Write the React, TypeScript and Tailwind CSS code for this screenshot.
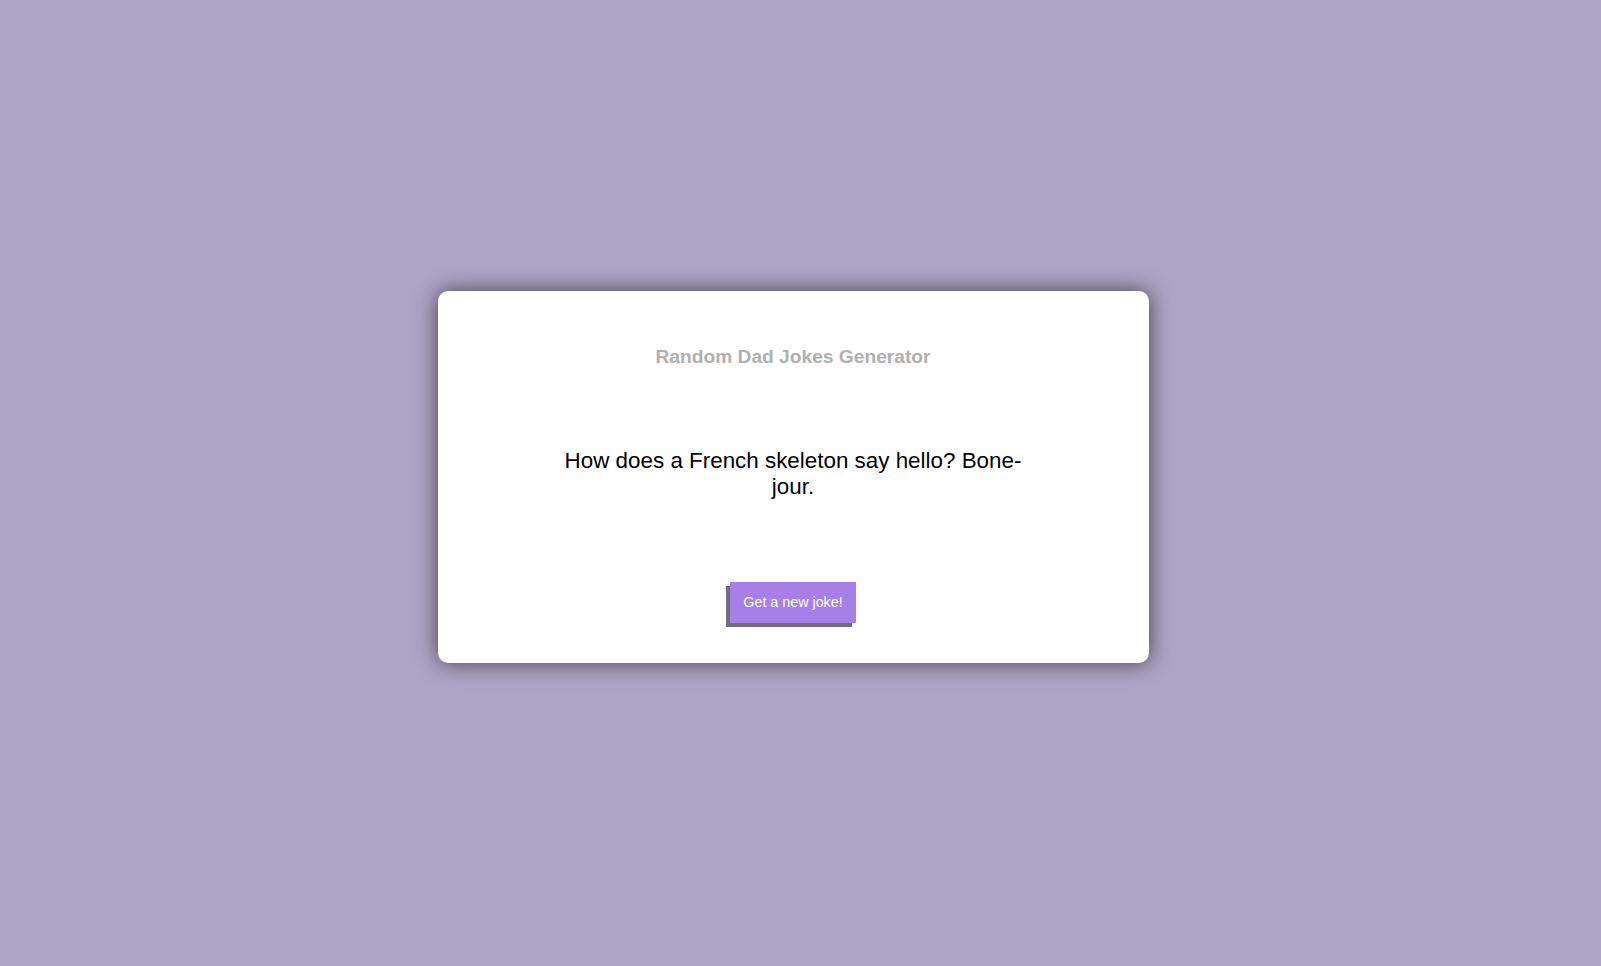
import React from "react";

const App: React.FC = () => {
  return (
    <div
      className="min-h-screen bg-[#aea4c6] flex items-center justify-center pr-[15px] pb-[12px]"
      style={{ fontFamily: '"Liberation Sans", Arial, sans-serif' }}
    >
      {/* Card */}
      <div className="w-[711px] bg-white rounded-[10px] shadow-[0_0_22px_rgba(0,0,0,0.62)] pt-[55px] pb-[40px] text-center">
        <h3 className="text-[19.2px] font-bold text-[#b0b0b0] [line-height:normal]">
          Random Dad Jokes Generator
        </h3>

        <p className="mx-auto mt-[80px] max-w-[480px] text-[22.4px] text-black [line-height:1.15]">
          How does a French skeleton say hello? Bone-jour.
        </p>

        <button className="mt-[82px] bg-[#a77fe8] text-white text-[14.3px] leading-[17px] px-[13px] py-3 shadow-[-4px_4px_0_#736c7d]">
          Get a new joke!
        </button>
      </div>
    </div>
  );
};

export default App;
